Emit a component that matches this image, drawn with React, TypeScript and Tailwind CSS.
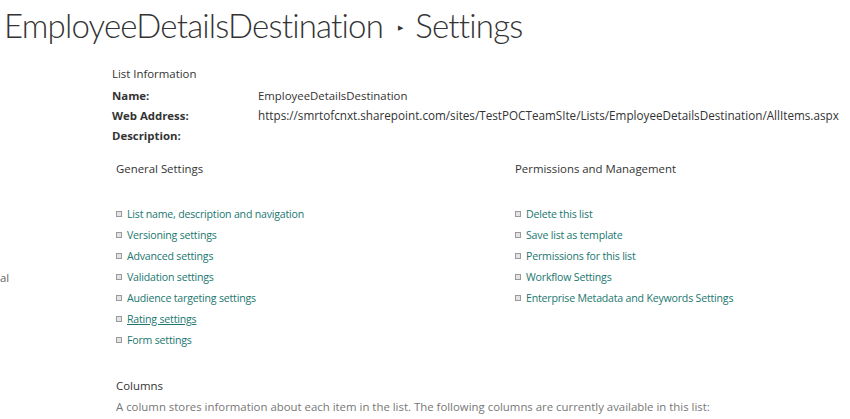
import React from "react";

const font = { fontFamily: '"Open Sans", "Noto Sans", sans-serif' };
const titleFont = { fontFamily: 'Lato, "Open Sans", sans-serif' };

function Bullet() {
  return (
    <span className="inline-block w-[6px] h-[6px] border border-[#9a9a9a] bg-[#e4e4e4] mr-[5px] relative top-[-1px]" />
  );
}

function LinkItem({ text, underline }: { text: string; underline?: boolean }) {
  return (
    <div className="h-[21px] flex items-center">
      <Bullet />
      <a className={"text-[#21776f] text-[10.6px] tracking-[-0.2px] " + (underline ? "underline" : "")}>{text}</a>
    </div>
  );
}

export default function App() {
  const general = [
    "List name, description and navigation",
    "Versioning settings",
    "Advanced settings",
    "Validation settings",
    "Audience targeting settings",
    "Rating settings",
    "Form settings",
  ];
  const perms = [
    "Delete this list",
    "Save list as template",
    "Permissions for this list",
    "Workflow Settings",
    "Enterprise Metadata and Keywords Settings",
  ];
  return (
    <div className="w-[850px] h-[419px] bg-white overflow-hidden relative text-[#333] text-[11.4px]" style={font}>
      <div className="pl-[4px] pt-[0px] h-[52px] flex items-center text-[33px] font-light tracking-[-0.8px] text-[#333] whitespace-nowrap" style={titleFont}>
        <span>EmployeeDetailsDestination</span>
        <span className="text-[7px] ml-[15px] mr-[13px] relative top-[1px]">▶</span>
        <span>Settings</span>
      </div>
      <div className="absolute left-0 top-[269px] text-[#666]">al</div>
      <div className="pl-[112px]">
        <div className="mt-[13px] h-[18px] flex items-center">List Information</div>
        <div className="mt-[3px]">
          <div className="flex h-[20px] items-center">
            <div className="w-[146px] font-bold">Name:</div>
            <div>EmployeeDetailsDestination</div>
          </div>
          <div className="flex h-[20px] items-center">
            <div className="w-[146px] font-bold">Web Address:</div>
            <div className="text-[11.7px]">https://smrtofcnxt.sharepoint.com/sites/TestPOCTeamSIte/Lists/EmployeeDetailsDestination/AllItems.aspx</div>
          </div>
          <div className="flex h-[19px] items-center">
            <div className="w-[146px] font-bold">Description:</div>
          </div>
        </div>
        <div className="flex pl-[4px] mt-[15px]">
          <div className="w-[399px]">
            <div className="h-[18px] flex items-center">General Settings</div>
            <div className="mt-[26px]">
              {general.map((g) => (
                <LinkItem key={g} text={g} underline={g === "Rating settings"} />
              ))}
            </div>
          </div>
          <div>
            <div className="h-[18px] flex items-center">Permissions and Management</div>
            <div className="mt-[26px]">
              {perms.map((g) => (
                <LinkItem key={g} text={g} />
              ))}
            </div>
          </div>
        </div>
        <div className="pl-[4px] mt-[26px]">
          <div className="h-[18px] flex items-center">Columns</div>
          <div className="text-[#777] mt-[3px] h-[18px] flex items-center">
            A column stores information about each item in the list. The following columns are currently available in this list:
          </div>
        </div>
      </div>
    </div>
  );
}
